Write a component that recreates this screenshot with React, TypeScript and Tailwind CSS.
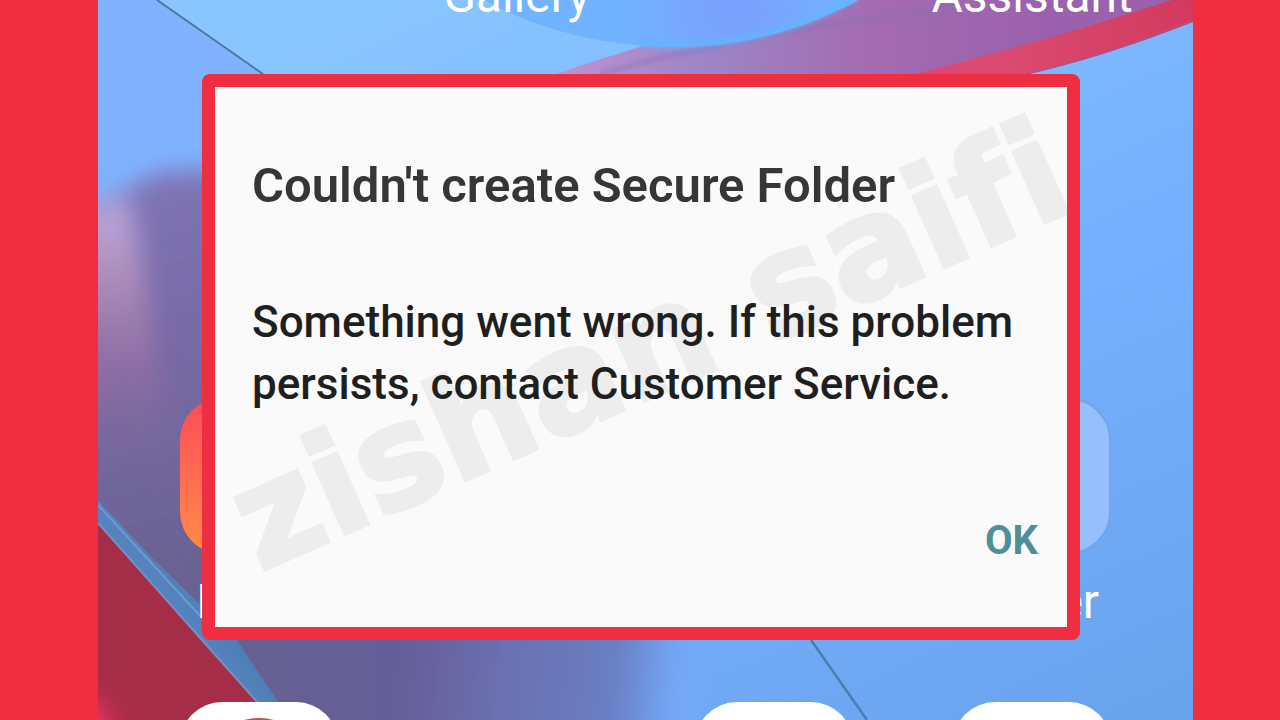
import React from 'react';

// Soft gradient wallpaper behind the home screen
const Wallpaper = () => (
  <svg
    className="absolute inset-0 h-full w-full"
    viewBox="98 0 1095 720"
    preserveAspectRatio="none"
    aria-hidden="true"
  >
    <defs>
      <linearGradient id="sky" x1="0.3" y1="0" x2="1" y2="1">
        <stop offset="0" stopColor="#89c5ff" />
        <stop offset="0.5" stopColor="#77b0ff" />
        <stop offset="1" stopColor="#69a3ec" />
      </linearGradient>
      <linearGradient id="petal" gradientUnits="userSpaceOnUse" x1="560" y1="20" x2="1040" y2="60">
        <stop offset="0" stopColor="#c092cf" />
        <stop offset="0.3" stopColor="#9c86c8" />
        <stop offset="0.65" stopColor="#a46bb0" />
        <stop offset="1" stopColor="#9a62ae" />
      </linearGradient>
      <linearGradient id="ribbon" gradientUnits="userSpaceOnUse" x1="920" y1="74" x2="1193" y2="0">
        <stop offset="0" stopColor="#de4775" />
        <stop offset="0.3" stopColor="#db4a70" />
        <stop offset="1" stopColor="#d23a5e" />
      </linearGradient>
      <radialGradient id="disc" gradientUnits="userSpaceOnUse" cx="735" cy="10" r="110">
        <stop offset="0" stopColor="#7a9ffd" />
        <stop offset="0.5" stopColor="#76a8fe" />
        <stop offset="1" stopColor="#70b3ff" />
      </radialGradient>
      <linearGradient id="shade" gradientUnits="userSpaceOnUse" x1="130" y1="180" x2="240" y2="640">
        <stop offset="0" stopColor="#8074b6" />
        <stop offset="0.35" stopColor="#776aa6" />
        <stop offset="1" stopColor="#66608c" />
      </linearGradient>
      <linearGradient id="haze" gradientUnits="userSpaceOnUse" x1="0" y1="170" x2="0" y2="500">
        <stop offset="0" stopColor="#b8b4ee" />
        <stop offset="0.25" stopColor="#b496c4" />
        <stop offset="0.6" stopColor="#946fa2" stopOpacity="0.8" />
        <stop offset="1" stopColor="#6f6590" stopOpacity="0" />
      </linearGradient>
      <linearGradient id="floor" gradientUnits="userSpaceOnUse" x1="240" y1="0" x2="740" y2="50">
        <stop offset="0" stopColor="#67628f" />
        <stop offset="0.45" stopColor="#655d98" />
        <stop offset="0.65" stopColor="#6b70b0" />
        <stop offset="0.88" stopColor="#6a7fc4" />
        <stop offset="1" stopColor="#74a9fa" />
      </linearGradient>
      <linearGradient id="stripe" gradientUnits="userSpaceOnUse" x1="175" y1="600" x2="204" y2="578">
        <stop offset="0" stopColor="#5583bd" />
        <stop offset="0.6" stopColor="#4c7fb5" />
        <stop offset="1" stopColor="#5f6d9d" />
      </linearGradient>
      <radialGradient id="glow" gradientUnits="userSpaceOnUse" cx="82" cy="728" r="58">
        <stop offset="0" stopColor="#ff9aa8" />
        <stop offset="0.3" stopColor="#e6315a" />
        <stop offset="1" stopColor="#a52d48" stopOpacity="0" />
      </radialGradient>
      <filter id="soft" x="-30%" y="-30%" width="160%" height="160%">
        <feGaussianBlur stdDeviation="12" />
      </filter>
      <filter id="hair" x="-5%" y="-20%" width="110%" height="140%">
        <feGaussianBlur stdDeviation="2" />
      </filter>
    </defs>

    <rect x="98" width="1095" height="720" fill="url(#sky)" />
    <path d="M98 0H157L263 74L340 140V260H98Z" fill="#7fb3ff" />
    <path d="M157 0L263 74" stroke="#4d7898" strokeWidth="2" />

    {/* Petal, ribbon and disc at the top */}
    <path d="M545 78C600 58 640 48 690 30L860 -10H1200L1100 40L940 78Z" fill="url(#petal)" />
    <path d="M600 74Q740 34 960 6" stroke="#8570b4" strokeWidth="4" fill="none" opacity="0.5" filter="url(#hair)" />
    <path d="M900 78C1010 50 1100 24 1196 -8V21C1140 42 1080 63 1010 78Z" fill="url(#ribbon)" />
    <path d="M1021 75C1080 62 1140 42 1193 21" stroke="#b94c84" strokeWidth="2" fill="none" />
    <path d="M478 -4C540 34 620 48 680 47C755 46 815 24 866 -4Z" fill="url(#disc)" />
    <path d="M640 44C735 50 800 28 856 -2" stroke="#62b5ff" strokeWidth="6" fill="none" opacity="0.8" filter="url(#hair)" />

    {/* Blurred violet shape on the left */}
    <path d="M60 240C100 215 130 180 165 172C230 166 300 170 400 300V760H60Z" fill="url(#shade)" filter="url(#soft)" />
    <path d="M40 225L90 205L126 196C142 230 150 330 175 480H40Z" fill="url(#haze)" filter="url(#soft)" />
    <path d="M200 560H640C670 620 690 680 715 760H200Z" fill="url(#floor)" filter="url(#soft)" />
    <path d="M811 640L867 720" stroke="#4d7cae" strokeWidth="2.5" />

    {/* Lower left corner */}
    <path d="M98 500L150 556L237 640L290 720H98Z" fill="url(#stripe)" />
    <path d="M98 505L202 618" stroke="#6b9bd0" strokeWidth="2" />
    <path d="M98 523L202 640L273 720H98Z" fill="#a52d48" />
    <path d="M98 523L202 640L273 720" stroke="#7790c0" strokeWidth="2" fill="none" />
    <rect x="98" y="640" width="70" height="80" fill="url(#glow)" />
  </svg>
);

const tile = 'h-[156px] w-[158px] rounded-[42px]';
const label = 'text-5xl leading-[56px] text-white';

const HomeScreen = () => (
  <div className="absolute inset-0 overflow-hidden px-8">
    <div className="grid h-[398px] grid-cols-4 justify-items-center">
      <span className={`${label} col-start-2 -mt-8`}>Gallery</span>
      <span className={`${label} col-start-4 -mt-8`}>Assistant</span>
    </div>
    <div className="grid h-[304px] grid-cols-4 justify-items-center">
      <div>
        <div className={`${tile} bg-linear-to-b from-[#ff4858] to-[#ff8a45]`} />
        <p className={`${label} mt-5 pl-4`}>I</p>
      </div>
      <div className="col-start-4">
        <div className={`${tile} border-2 border-[#76a4e6] bg-[#96c0fd]`} />
        <p className={`${label} mt-5 pr-3 text-right`}>er</p>
      </div>
    </div>
    <div className="grid grid-cols-4 justify-items-center">
      <div className={`${tile} flex justify-center overflow-hidden bg-white pt-4`}>
        <span className="size-28 rounded-full bg-[#cb4a50]" />
      </div>
      <div className={`${tile} col-start-3 bg-white`} />
      <div className={`${tile} bg-white`} />
    </div>
  </div>
);

const ErrorDialog = () => (
  <div
    role="alertdialog"
    aria-labelledby="dialog-title"
    aria-describedby="dialog-message"
    className="relative flex w-full flex-col overflow-hidden rounded-lg border-[13px] border-[#f02e42] bg-[#fafafa]"
  >
    <div className="pointer-events-none absolute inset-0 flex items-center justify-center pb-6 pl-4">
      <span className="-rotate-24 whitespace-nowrap font-['DejaVu_Sans',sans-serif] text-[141px] leading-none font-bold text-[#ededed] [font-variant-ligatures:none] [-webkit-text-stroke:4px_#ededed]">
        zishan saifi
      </span>
    </div>
    <div className="relative flex flex-1 flex-col px-[37px] pt-[68px] pb-14">
      <h1 id="dialog-title" className="text-[49px] leading-[62px] font-semibold text-[#363636]">
        Couldn't create Secure Folder
      </h1>
      <p id="dialog-message" className="mt-[74px] text-[44px] leading-[62px] font-medium text-[#1f1f1f]">
        Something went wrong. If this problem persists, contact Customer Service.
      </p>
      <button type="button" className="mt-auto -mr-2 self-end text-[40px] leading-[60px] font-bold text-[#4f8f99]">
        OK
      </button>
    </div>
  </div>
);

const App = () => {
  return (
    <div className="flex h-screen bg-[#f02e42] pr-[87px] pl-[98px] font-[Roboto,sans-serif]">
      <main className="relative flex-1 overflow-hidden">
        <Wallpaper />
        <HomeScreen />
        <div className="absolute inset-0 flex pt-[74px] pr-[113px] pb-20 pl-[104px]">
          <ErrorDialog />
        </div>
      </main>
    </div>
  );
};

export default App;
